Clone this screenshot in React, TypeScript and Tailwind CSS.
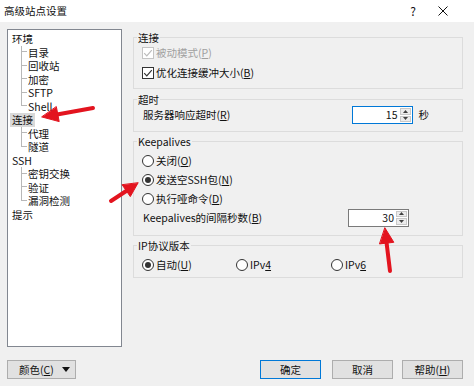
import React from "react";

type TreeNode = { label: string; children?: string[]; selected?: boolean };

const tree: TreeNode[] = [
  { label: "环境", children: ["目录", "回收站", "加密", "SFTP", "Shell"] },
  { label: "连接", children: ["代理", "隧道"], selected: true },
  { label: "SSH", children: ["密钥交换", "验证", "漏洞检测"] },
  { label: "提示" },
];

function ChildRow({ label, last }: { label: string; last: boolean }) {
  return (
    <div className="flex h-[13.5px] items-stretch">
      <div className="ml-[13px] flex w-[6px] flex-col">
        <div className="h-1/2 border-b border-l border-[#b8b8b8]" />
        <div className={last ? "h-1/2" : "h-1/2 border-l border-[#b8b8b8]"} />
      </div>
      <span className="ml-[1px] leading-[13.5px]">{label}</span>
    </div>
  );
}

function Tree() {
  return (
    <div className="h-[318px] w-[115px] border border-[#828790] bg-white pt-[2px]">
      {tree.map((node) => (
        <div key={node.label}>
          <div className="flex h-[13.5px] items-center pl-[2px]">
            <span
              className={`px-[2px] leading-[13.5px] ${node.selected ? "bg-[#d9d9d9]" : ""}`}
            >
              {node.label}
            </span>
          </div>
          {node.children?.map((c, i) => (
            <ChildRow key={c} label={c} last={i === node.children!.length - 1} />
          ))}
        </div>
      ))}
    </div>
  );
}

function Group({
  title,
  className,
  children,
}: {
  title: string;
  className?: string;
  children: React.ReactNode;
}) {
  return (
    <fieldset className={`border border-[#dcdcdc] px-[8px] ${className ?? ""}`}>
      <legend className="ml-[-5px] px-[1px] leading-[13.5px]">{title}</legend>
      {children}
    </fieldset>
  );
}

function Checkbox({ checked, disabled }: { checked?: boolean; disabled?: boolean }) {
  const c = disabled ? "#bcbcbc" : "#333333";
  return (
    <span
      className={`flex h-[12px] w-[12px] items-center justify-center border bg-white ${
        disabled ? "border-[#c4c4c4]" : "border-[#333333]"
      }`}
    >
      {checked && (
        <svg width="10" height="10" viewBox="0 0 10 10">
          <path d="M1.2 5.2 L3.8 7.8 L8.8 2.2" fill="none" stroke={c} strokeWidth="1.2" />
        </svg>
      )}
    </span>
  );
}

function Radio({ checked }: { checked?: boolean }) {
  return (
    <span className="flex h-[12px] w-[12px] items-center justify-center rounded-full border border-[#333333] bg-white">
      {checked && <span className="h-[6px] w-[6px] rounded-full bg-[#333333]" />}
    </span>
  );
}

function Spin({ value, focused }: { value: string; focused?: boolean }) {
  return (
    <div
      className={`flex h-[18px] w-[61px] items-stretch border bg-white ${
        focused ? "border-[#0078d7]" : "border-[#7a7a7a]"
      }`}
    >
      <span className="flex-1 pr-[2px] text-right leading-[16px]">{value}</span>
      <div className="my-[1px] mr-[1px] flex w-[11px] flex-col gap-[1px]">
        <div className="flex flex-1 items-center justify-center border border-[#c8c8c8] bg-[#ececec]">
          <svg width="5" height="3" viewBox="0 0 5 3">
            <path d="M0 3 L2.5 0 L5 3 Z" fill="#404040" />
          </svg>
        </div>
        <div className="flex flex-1 items-center justify-center border border-[#c8c8c8] bg-[#ececec]">
          <svg width="5" height="3" viewBox="0 0 5 3">
            <path d="M0 0 L2.5 3 L5 0 Z" fill="#404040" />
          </svg>
        </div>
      </div>
    </div>
  );
}

export default function App() {
  return (
    <div className="relative flex h-[386px] w-[474px] flex-col overflow-hidden bg-[#f0f0f0] font-['Noto_Sans_CJK_SC',sans-serif] text-[10.5px] text-[#111]">
      {/* title bar */}
      <div className="flex h-[22px] items-center bg-white pl-[4px]">
        <span className="leading-[14px]">高级站点设置</span>
        <span className="ml-auto mr-[22px] text-[12px] leading-[14px]">?</span>
        <svg width="10" height="10" viewBox="0 0 10 10" className="mr-[26px]">
          <path d="M0.5 0.5 L9.5 9.5 M9.5 0.5 L0.5 9.5" stroke="#111" strokeWidth="1" />
        </svg>
      </div>

      <div className="flex px-[7px] pt-[7px]">
        <Tree />

        <div className="ml-[11px] flex w-[330px] flex-col pt-[2px]">
          <Group title="连接" className="pb-[7px]">
            <div className="flex h-[16px] items-center gap-[2px] text-[#a0a0a0]">
              <Checkbox checked disabled />
              <span>
                被动模式(<u>P</u>)
              </span>
            </div>
            <div className="mt-[4px] flex h-[16px] items-center gap-[2px]">
              <Checkbox checked />
              <span>
                优化连接缓冲大小(<u>B</u>)
              </span>
            </div>
          </Group>

          <Group title="超时" className="mt-[4px] pb-[7px]">
            <div className="flex h-[18px] items-center">
              <span className="ml-[1px]">
                服务器响应超时(<u>R</u>)
              </span>
              <div className="ml-auto flex items-center">
                <Spin value="15" focused />
                <span className="ml-[6px] mr-[25px]">秒</span>
              </div>
            </div>
          </Group>

          <Group title="Keepalives" className="mt-[3px] pb-[8px]">
            <div className="mt-[3px] flex h-[19px] items-center gap-[2px]">
              <Radio />
              <span>
                关闭(<u>O</u>)
              </span>
            </div>
            <div className="flex h-[19px] items-center gap-[2px]">
              <Radio checked />
              <span>
                发送空SSH包(<u>N</u>)
              </span>
            </div>
            <div className="flex h-[19px] items-center gap-[2px]">
              <Radio />
              <span>
                执行哑命令(<u>D</u>)
              </span>
            </div>
            <div className="flex h-[18px] items-center">
              <span className="ml-[1px]">
                Keepalives的间隔秒数(<u>B</u>)
              </span>
              <div className="ml-auto mr-[45px]">
                <Spin value="30" />
              </div>
            </div>
          </Group>

          <Group title="IP协议版本" className="mt-[3px] pb-[3px]">
            <div className="mt-[4px] flex h-[18px] items-center">
              <div className="flex w-[94px] items-center gap-[2px]">
                <Radio checked />
                <span>
                  自动(<u>U</u>)
                </span>
              </div>
              <div className="flex w-[95px] items-center gap-[2px]">
                <Radio />
                <span>
                  IPv<u>4</u>
                </span>
              </div>
              <div className="flex items-center gap-[2px]">
                <Radio />
                <span>
                  IPv<u>6</u>
                </span>
              </div>
            </div>
          </Group>
        </div>
      </div>

      {/* bottom buttons */}
      <div className="mt-[13px] flex items-center pl-[7px] pr-[11px]">
        <div className="flex h-[19px] w-[69px] items-center border border-[#adadad] bg-[#e1e1e1] pl-[11px] pr-[5px]">
          <span>
            颜色(<u>C</u>)
          </span>
          <svg width="8" height="5" viewBox="0 0 8 5" className="ml-auto">
            <path d="M0 0 L8 0 L4 5 Z" fill="#111" />
          </svg>
        </div>
        <div className="flex-1" />
        <div className="flex h-[19px] w-[61px] items-center justify-center border border-[#0078d7] bg-[#e1e1e1]">
          确定
        </div>
        <div className="ml-[11px] flex h-[19px] w-[61px] items-center justify-center border border-[#adadad] bg-[#e1e1e1]">
          取消
        </div>
        <div className="ml-[9px] flex h-[19px] w-[61px] items-center justify-center border border-[#adadad] bg-[#e1e1e1]">
          帮助(<u>H</u>)
        </div>
      </div>

      {/* red annotation arrows */}
      <svg
        className="pointer-events-none absolute inset-0"
        width="474"
        height="386"
        viewBox="0 0 474 386"
      >
        <g fill="#e3141f" stroke="#e3141f" strokeLinecap="round">
          <line x1="93" y1="108" x2="57" y2="114.5" strokeWidth="4" />
          <polygon points="42,117 59.2,121.6 56.4,106.9" strokeWidth="1" />
          <line x1="111" y1="201" x2="127" y2="190.5" strokeWidth="4" />
          <polygon points="138,183 130.3,196.6 122.3,185" strokeWidth="1" />
          <line x1="390" y1="271" x2="386.6" y2="243" strokeWidth="4" />
          <polygon points="385,228 393.8,242.3 379.8,243.9" strokeWidth="1" />
        </g>
      </svg>
    </div>
  );
}
